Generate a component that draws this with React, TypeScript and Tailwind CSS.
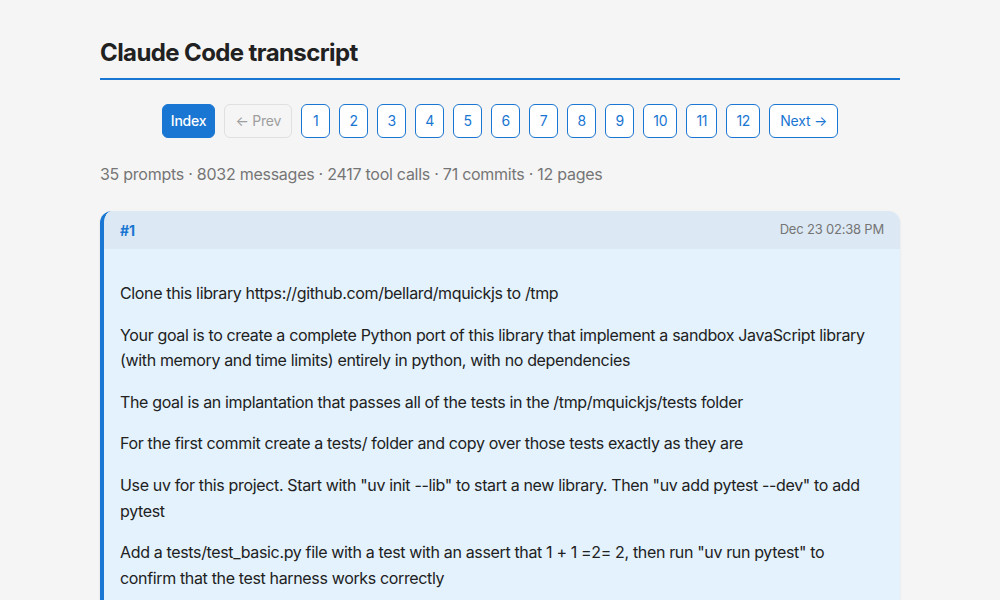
export default function App() {
  const pages = [1, 2, 3, 4, 5, 6, 7, 8, 9, 10, 11, 12];

  const paragraphs = [
    "Clone this library https://github.com/bellard/mquickjs to /tmp",
    "Your goal is to create a complete Python port of this library that implement a sandbox JavaScript library (with memory and time limits) entirely in python, with no dependencies",
    "The goal is an implantation that passes all of the tests in the /tmp/mquickjs/tests folder",
    "For the first commit create a tests/ folder and copy over those tests exactly as they are",
    'Use uv for this project. Start with "uv init --lib" to start a new library. Then "uv add pytest --dev" to add pytest',
    'Add a tests/test_basic.py file with a test with an assert that 1 + 1 =2= 2, then run "uv run pytest" to confirm that the test harness works correctly',
  ];

  return (
    <div
      className="min-h-screen bg-[#f5f5f5] text-[#212121]"
      style={{ fontFamily: "Inter, 'Noto Sans', sans-serif" }}
    >
      <div className="mx-auto w-[800px] pt-[38px]">
        <h1 className="border-b-2 border-[#1976d2] pb-[10px] text-[24px] font-bold leading-[30px] tracking-[-0.6px]">
          Claude Code transcript
        </h1>

        <div className="mt-[24px] flex justify-center gap-[9px] text-[14px] leading-[20px] tracking-[-0.2px]">
          <span className="rounded-md border border-[#1976d2] bg-[#1976d2] px-[8px] py-[6px] font-medium text-white">
            Index
          </span>
          <span className="rounded-md border border-[#e0e0e0] bg-[#f5f5f5] px-[10px] py-[6px] text-[#9e9e9e]">
            ← Prev
          </span>
          {pages.map((p) => (
            <span
              key={p}
              className="min-w-[29px] rounded-md border border-[#1976d2] bg-white px-[9px] py-[6px] text-center text-[#1976d2]"
            >
              {p}
            </span>
          ))}
          <span className="rounded-md border border-[#1976d2] bg-white px-[10px] py-[6px] text-[#1976d2]">
            Next →
          </span>
        </div>

        <p className="mt-[24px] text-[16px] leading-[24px] tracking-[-0.26px] text-[#757575]">
          35 prompts · 8032 messages · 2417 tool calls · 71 commits · 12 pages
        </p>

        <div className="mt-[25px] overflow-hidden rounded-xl border-l-4 border-[#1976d2] bg-[#e3f2fd] shadow-[0_1px_3px_rgba(0,0,0,0.08)]">
          <div className="flex h-[38px] items-center justify-between bg-[#dce8f3] px-4">
            <span className="text-[14px] font-bold text-[#1976d2]">#1</span>
            <span className="text-[13px] tracking-[-0.2px] text-[#757575]">Dec 23 02:38 PM</span>
          </div>
          <div className="px-4 pt-[16px] pb-8 text-[16px] leading-[25.6px] tracking-[-0.35px] text-[#212121]">
            {paragraphs.map((t, i) => (
              <p key={i} className="my-4">
                {t}
              </p>
            ))}
          </div>
        </div>
      </div>
    </div>
  );
}
